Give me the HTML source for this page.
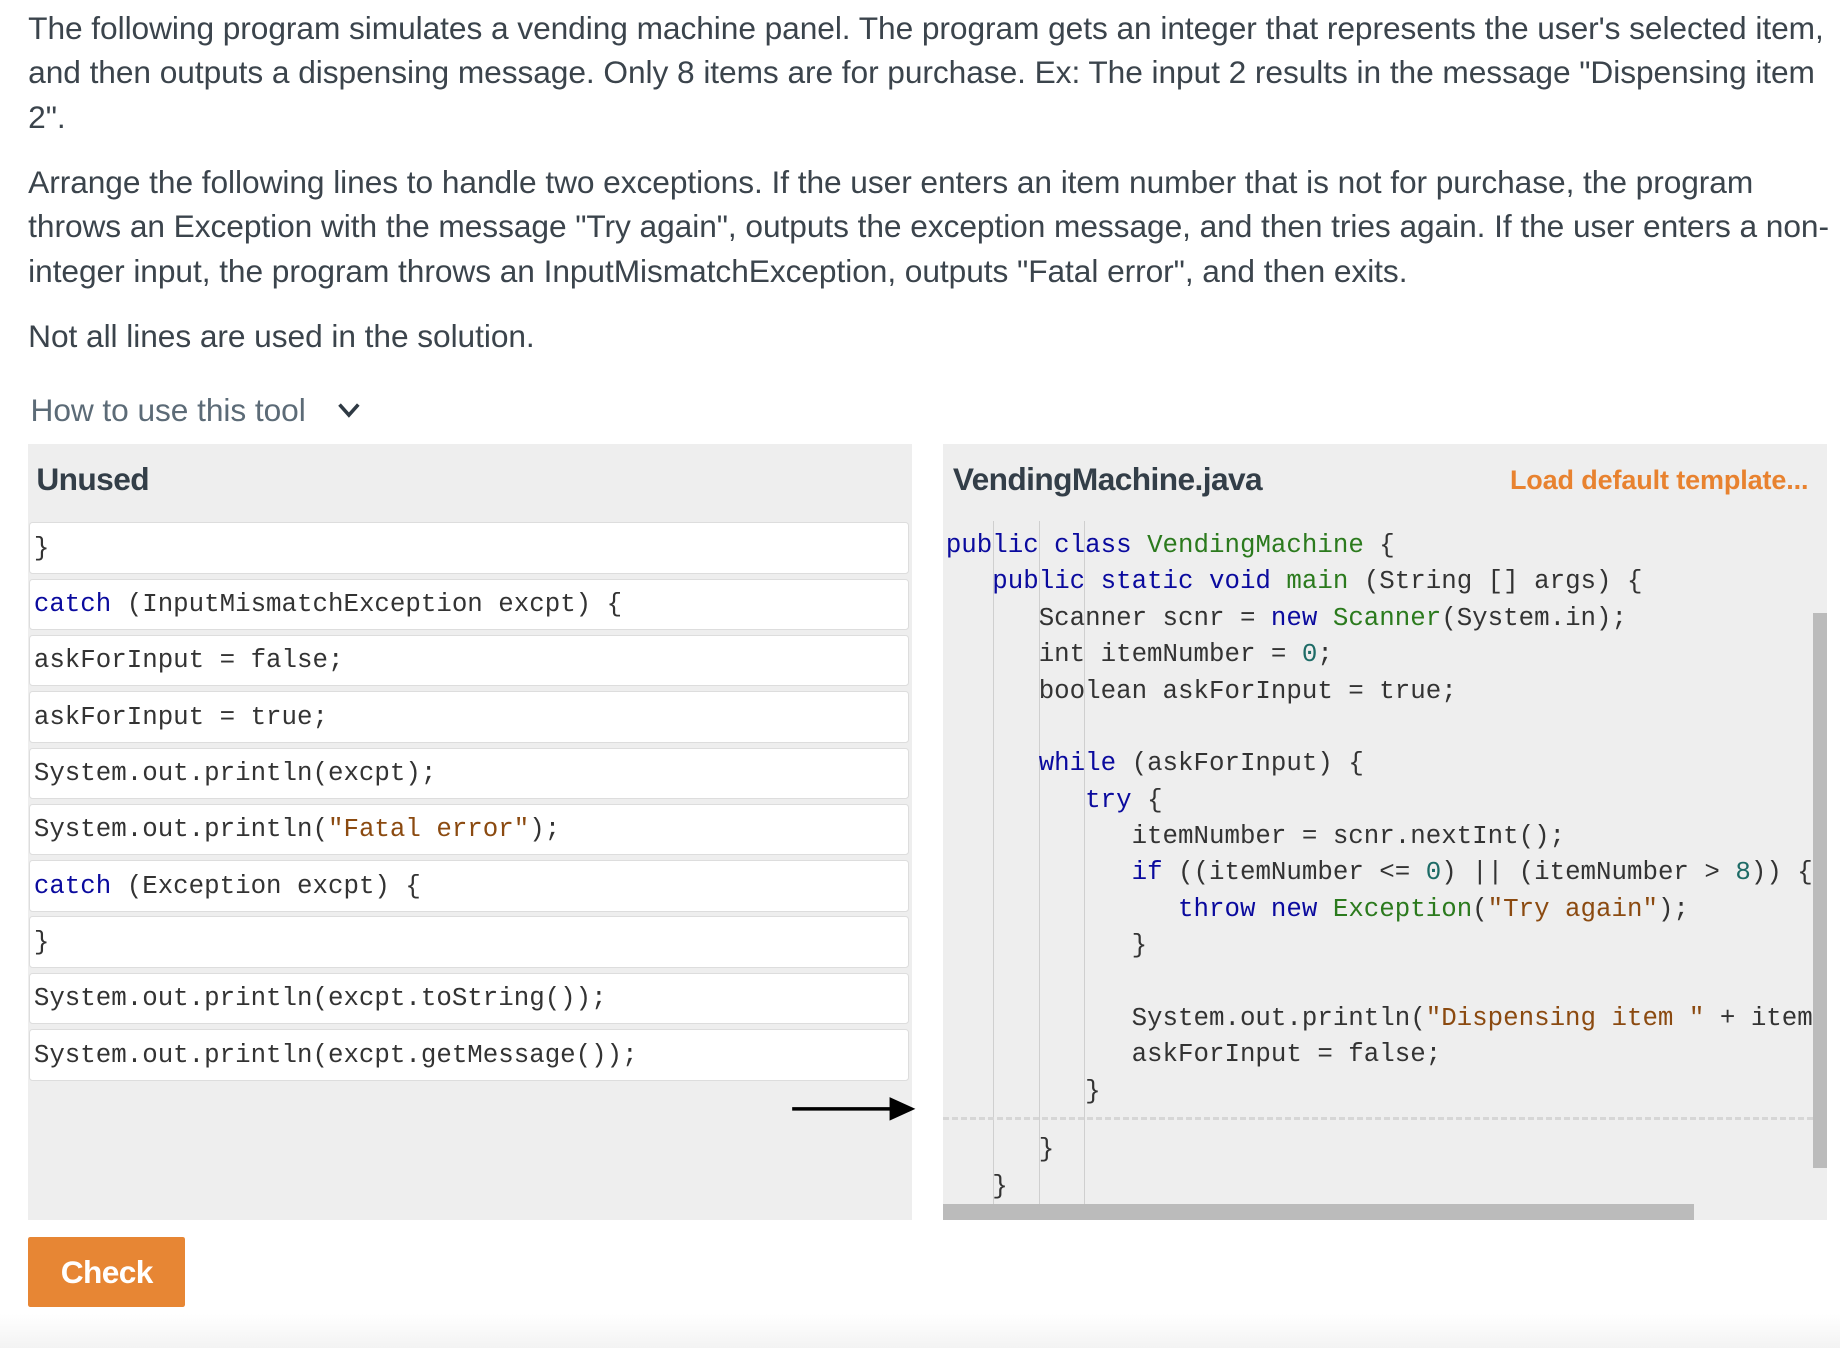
<!DOCTYPE html>
<html><head><meta charset="utf-8"><style>
html,body{margin:0;padding:0;background:#fff;}
body{width:1840px;height:1348px;overflow:hidden;position:relative;}
#w{zoom:1.17347;width:1568px;height:1149px;position:relative;font-family:"Liberation Sans",sans-serif;color:#3b444c;}
.p{position:absolute;left:24px;font-size:27px;white-space:nowrap;letter-spacing:-0.05px;line-height:38px;}
.mono{font-family:"Liberation Mono",monospace;font-size:22px;white-space:pre;color:#333;}
.k{color:#0a0a9e}.g{color:#2b7a1d}.s{color:#8b4a10}.n{color:#1d6b66}
.item{position:absolute;left:25px;width:750px;height:44px;background:#fff;border:1px solid #ddd;border-radius:3px;box-sizing:border-box;}
.item>span{position:absolute;left:3px;top:9px;}
.vg{position:absolute;top:444px;height:582px;width:1px;background:#cfcfcf;}
</style></head><body><div id="w">
<div class="p" style="top:5px">The following program simulates a vending machine panel. The program gets an integer that represents the user's selected item,</div>
<div class="p" style="top:43px">and then outputs a dispensing message. Only 8 items are for purchase. Ex: The input 2 results in the message "Dispensing item</div>
<div class="p" style="top:81px">2".</div>
<div class="p" style="top:136px">Arrange the following lines to handle two exceptions. If the user enters an item number that is not for purchase, the program</div>
<div class="p" style="top:174px">throws an Exception with the message "Try again", outputs the exception message, and then tries again. If the user enters a non-</div>
<div class="p" style="top:212px">integer input, the program throws an InputMismatchException, outputs "Fatal error", and then exits.</div>
<div class="p" style="top:268px">Not all lines are used in the solution.</div>
<div class="p" style="top:331px;left:26px;color:#5c6b77">How to use this tool</div>
<svg style="position:absolute;left:286px;top:342px" width="22" height="16"><path d="M3 3 L11 12 L19 3" stroke="#2f3a44" stroke-width="3" fill="none"/></svg>

<div style="position:absolute;left:24px;top:378px;width:753px;height:662px;background:#eee"></div>
<div style="position:absolute;left:31px;top:393px;font-size:27px;font-weight:bold;color:#333e48;letter-spacing:-0.5px">Unused</div>
<div class="item" style="top:445px"><span class="mono">}</span></div>
<div class="item" style="top:493px"><span class="mono"><span class="k">catch</span> (InputMismatchException excpt) {</span></div>
<div class="item" style="top:541px"><span class="mono">askForInput = false;</span></div>
<div class="item" style="top:589px"><span class="mono">askForInput = true;</span></div>
<div class="item" style="top:637px"><span class="mono">System.out.println(excpt);</span></div>
<div class="item" style="top:685px"><span class="mono">System.out.println(<span class="s">"Fatal error"</span>);</span></div>
<div class="item" style="top:733px"><span class="mono"><span class="k">catch</span> (Exception excpt) {</span></div>
<div class="item" style="top:781px"><span class="mono">}</span></div>
<div class="item" style="top:829px"><span class="mono">System.out.println(excpt.toString());</span></div>
<div class="item" style="top:877px"><span class="mono">System.out.println(excpt.getMessage());</span></div>
<svg style="position:absolute;left:674px;top:934px" width="110" height="24"><line x1="1" y1="11" x2="88" y2="11" stroke="#000" stroke-width="3"/><path d="M84 1 L106 11 L84 21 Z" fill="#000"/></svg>

<div style="position:absolute;left:804px;top:378px;width:753px;height:662px;background:#eee"></div>
<div style="position:absolute;left:812px;top:393px;font-size:27px;font-weight:bold;color:#333e48;letter-spacing:-0.5px">VendingMachine.java</div>
<div style="position:absolute;right:27px;top:396px;font-size:23px;font-weight:bold;color:#e8822f;letter-spacing:-0.1px">Load default template...</div>
<div class="vg" style="left:846px"></div><div class="vg" style="left:885px"></div><div class="vg" style="left:924px"></div>
<div style="position:absolute;left:804px;top:444px;width:741px;height:582px;overflow:hidden">
<div class="mono" style="position:absolute;left:2px;top:6px;line-height:31px"><span class="k">public class</span> <span class="g">VendingMachine</span> {
   <span class="k">public static void</span> <span class="g">main</span> (String [] args) {
      Scanner scnr = <span class="k">new</span> <span class="g">Scanner</span>(System.in);
      int itemNumber = <span class="n">0</span>;
      boolean askForInput = true;

      <span class="k">while</span> (askForInput) {
         <span class="k">try</span> {
            itemNumber = scnr.nextInt();
            <span class="k">if</span> ((itemNumber &lt;= <span class="n">0</span>) || (itemNumber &gt; <span class="n">8</span>)) {
               <span class="k">throw new</span> <span class="g">Exception</span>(<span class="s">"Try again"</span>);
            }

            System.out.println(<span class="s">"Dispensing item "</span> + itemNumber);
            askForInput = false;
         }
</div>
<div style="position:absolute;left:0;top:508px;width:741px;border-top:3px dashed #d6d6d6"></div>
<div class="mono" style="position:absolute;left:2px;top:521px;line-height:31px">      }
   }</div>
</div>
<div style="position:absolute;left:1545px;top:522px;width:12px;height:473px;background:#bbb"></div>
<div style="position:absolute;left:804px;top:1026px;width:640px;height:14px;background:#bbb"></div>

<div style="position:absolute;left:24px;top:1054px;width:134px;height:60px;background:#e78634;border-radius:2px;color:#fff;font-weight:bold;font-size:27px;text-align:center;line-height:60px;letter-spacing:-0.5px">Check</div>
<div style="position:absolute;left:0;top:1120px;width:1568px;height:29px;background:linear-gradient(#fff,#f3f3f3)"></div>
</div></body></html>
